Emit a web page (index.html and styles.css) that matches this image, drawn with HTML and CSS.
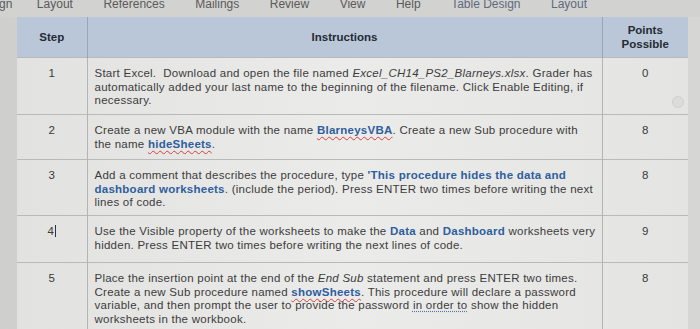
FILE: index.html
```html
<!DOCTYPE html>
<html>
<head>
<meta charset="utf-8">
<link rel="stylesheet" href="styles.css">
</head>
<body>
<div class="ribbon">
  <span class="tab gn">gn</span>
  <span class="tab">Layout</span>
  <span class="tab">References</span>
  <span class="tab">Mailings</span>
  <span class="tab">Review</span>
  <span class="tab">View</span>
  <span class="tab">Help</span>
  <span class="tab ctx">Table Design</span>
  <span class="tab ctx">Layout</span>
</div>
<div class="doc">
  <table class="grid">
    <colgroup><col class="c1"><col class="c2"><col class="c3"></colgroup>
    <thead>
      <tr class="hd">
        <th>Step</th>
        <th>Instructions</th>
        <th>Points<br>Possible</th>
      </tr>
    </thead>
    <tbody>
      <tr class="r1">
        <td class="num">1</td>
        <td class="txt">Start Excel.&nbsp; Download and open the file named <i>Excel_CH14_PS2_Blarneys.xlsx</i>. Grader has automatically added your last name to the beginning of the filename. Click Enable Editing, if necessary.</td>
        <td class="pts">0<span class="blob"></span></td>
      </tr>
      <tr class="r2">
        <td class="num">2</td>
        <td class="txt">Create a new VBA module with the name <b class="kw sq">BlarneysVBA</b>. Create a new Sub procedure with the name <b class="kw sq">hideSheets</b>.</td>
        <td class="pts">8</td>
      </tr>
      <tr class="r3">
        <td class="num">3</td>
        <td class="txt">Add a comment that describes the procedure, type <b class="kw">'This procedure hides the data and dashboard worksheets</b>. (include the period). Press ENTER two times before writing the next lines of code.</td>
        <td class="pts">8</td>
      </tr>
      <tr class="r4">
        <td class="num">4<span class="caret"></span></td>
        <td class="txt">Use the Visible property of the worksheets to make the <b class="kw">Data</b> and <b class="kw">Dashboard</b> worksheets very hidden. Press ENTER two times before writing the next lines of code.</td>
        <td class="pts">9</td>
      </tr>
      <tr class="r5">
        <td class="num">5</td>
        <td class="txt">Place the insertion point at the end of the <i>End Sub</i> statement and press ENTER two times. Create a new Sub procedure named <b class="kw sq">showSheets</b>. This procedure will declare a password variable, and then prompt the user to provide the password <span class="dot">in order to</span> show the hidden worksheets in the workbook.</td>
        <td class="pts">8</td>
      </tr>
    </tbody>
  </table>
</div>
</body>
</html>
```

FILE: styles.css
```css
html, body {
  margin: 0;
  padding: 0;
}
body {
  width: 700px;
  height: 329px;
  overflow: hidden;
  background: linear-gradient(90deg, #cfcfcd 0%, #dcdcda 40%, #d6d6d4 100%);
  font-family: "Liberation Sans", Arial, sans-serif;
  color: #3a3a3a;
}
.ribbon {
  height: 17px;
  display: flex;
  gap: 30.5px;
  align-items: flex-start;
  font-size: 12px;
  line-height: 13px;
  color: #5a5a5a;
  background: #d2d2d0;
  overflow: hidden;
}
.tab {
  margin-top: -2px;
  white-space: nowrap;
}
.gn { margin-left: -1px; margin-right: -6px; }
.ctx { color: #5d6a80; }

.doc {
  padding-left: 17px;
}
.grid {
  border-collapse: collapse;
  width: 671px;
  table-layout: fixed;
  font-size: 11.5px;
  line-height: 13.5px;
  background: linear-gradient(90deg, #e2e2e0 0%, #ebebea 50%, #e4e4e2 100%);
}
.c1 { width: 70px; }
.c2 { width: 515px; }
.c3 { width: 86px; }
.grid th {
  background: #b9c7d9;
  color: #252a33;
  font-weight: bold;
  font-size: 11.5px;
  line-height: 14px;
  height: 40px;
  padding: 0;
  border-left: 1px solid #9aa6b6;
  vertical-align: middle;
}
.grid th:first-child { border-left: none; }
.grid td {
  border-top: 1px solid #b9b9b7;
  border-left: 1px solid #b4b4b2;
  vertical-align: top;
  padding: 0;
}
.grid td:first-child { border-left: none; }
.num {
  text-align: center;
  padding-top: 9px !important;
  position: relative;
}
.txt {
  padding: 9px 6px 0 7px !important;
  color: #3c3c3c;
  letter-spacing: 0.25px;
}
.pts {
  text-align: center;
  padding-top: 9px !important;
  position: relative;
}
.r1 td { height: 47px; }
.r2 td { height: 35px; }
.r3 td { height: 46px; }
.r4 td { height: 37px; }
.r5 td { height: 58px; }
.kw {
  color: #2f5e9e;
}
.sq {
  text-decoration: underline wavy #d04040;
  text-decoration-thickness: 1px;
  text-underline-offset: 2px;
}
.dot {
  text-decoration: underline dotted #5a6fb0;
  text-underline-offset: 2px;
}
.caret {
  display: inline-block;
  width: 1px;
  height: 12px;
  background: #333;
  vertical-align: -2px;
  margin-left: 1px;
}
.blob {
  position: absolute;
  right: 4px;
  top: 38px;
  width: 10px;
  height: 10px;
  border-radius: 50%;
  border: 1px solid #d0d0d0;
  background: #dcdcdc;
}
```
